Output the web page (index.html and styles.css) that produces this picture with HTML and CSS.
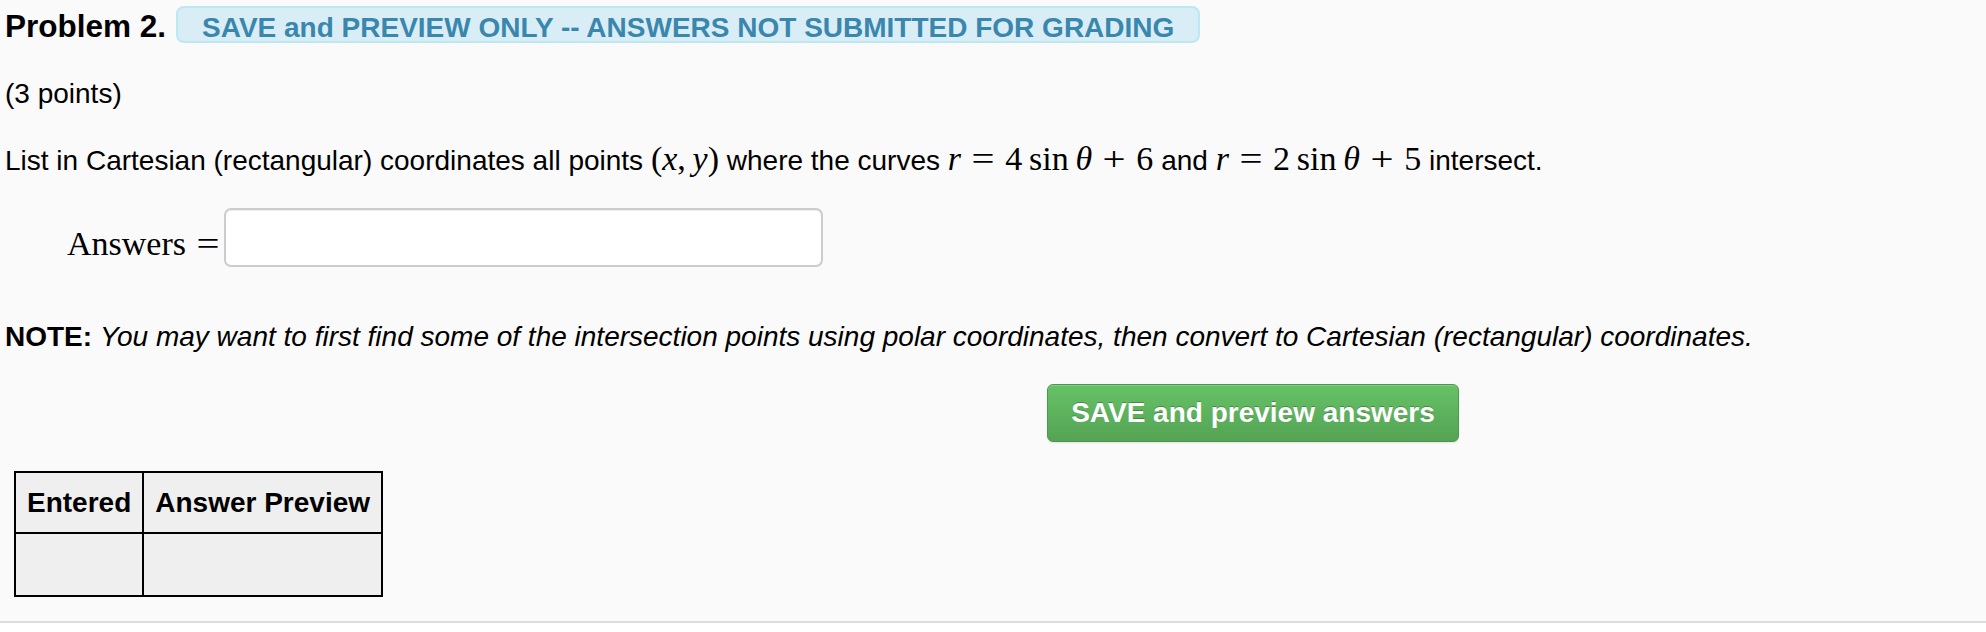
FILE: index.html
```html
<!DOCTYPE html>
<html>
<head>
<meta charset="utf-8">
<link rel="stylesheet" href="styles.css">
</head>
<body>
<div class="page">
  <div class="header">
    <h3 class="title">Problem 2.</h3>
    <span class="badge">SAVE and PREVIEW ONLY -- ANSWERS NOT SUBMITTED FOR GRADING</span>
  </div>
  <p class="points">(3 points)</p>
  <p class="question">List in Cartesian (rectangular) coordinates all points <span class="math">(<i>x</i>,<span class="comma"></span><i>y</i>)</span> where the curves <span class="math"><i>r</i><span class="rel"><span class="op">=</span></span>4<span class="thin"></span>sin<span class="thin"></span><i>θ</i><span class="bin"><span class="op">+</span></span>6</span> and <span class="math"><i>r</i><span class="rel"><span class="op">=</span></span>2<span class="thin"></span>sin<span class="thin"></span><i>θ</i><span class="bin"><span class="op">+</span></span>5</span> intersect.</p>
  <div class="answer-row">
    <span class="math label">Answers<span class="rel"><span class="op">=</span></span></span>
    <input class="answer" type="text">
  </div>
  <p class="note"><b>NOTE:</b> <i>You may want to first find some of the intersection points using polar coordinates, then convert to Cartesian (rectangular) coordinates.</i></p>
  <div class="actions">
    <button class="btn-success">SAVE and preview answers</button>
  </div>
  <table class="preview">
    <tr><th class="c1">Entered</th><th class="c2">Answer Preview</th></tr>
    <tr><td class="c1">&nbsp;</td><td class="c2">&nbsp;</td></tr>
  </table>
</div>
</body>
</html>
```
FILE: styles.css
```css
html { background: #ffffff; }
body {
  margin: 0;
  font-family: "Liberation Sans", Arial, sans-serif;
  font-size: 28px;
  color: #000;
}
.page {
  background: #fafafa;
  border-bottom: 2px solid #dcdcdc;
  padding: 6px 0 24px 5px;
}
.header {
  display: flex;
  align-items: center;
  gap: 10px;
  height: 37px;
}
.title {
  margin: 0;
  font-size: 31.5px;
  font-weight: bold;
  line-height: 37px;
  padding-top: 3px;
}
.badge {
  box-sizing: border-box;
  height: 37px;
  padding: 2px 24px 0 24px;
  background: #d9edf7;
  border: 2px solid #bce8f1;
  border-radius: 8px;
  color: #3a87ad;
  font-weight: bold;
  line-height: 35px;
}
p { margin: 0; line-height: 33px; }
.points { margin-top: 34px; }
.question { margin-top: 32px; }
.math {
  font-family: "Liberation Serif", "Times New Roman", serif;
  font-size: 34px;
  line-height: 33px;
}
.math i { font-style: italic; }
.thin { display: inline-block; width: 0.2em; }
.comma { display: inline-block; width: 0.2em; }
.rel, .bin { padding: 0 0.3em; }
.op {
  display: inline-block;
  width: 0.7em;
  text-align: center;
  transform: scaleX(1.2);
}
.answer-row {
  display: flex;
  align-items: center;
  margin-top: 31px;
  padding-left: 62px;
}
.label { padding-top: 12px; margin-right: 4px; }
.label .rel { padding-right: 0; }
.answer {
  box-sizing: border-box;
  width: 599px;
  height: 59px;
  margin: 0;
  border: 2px solid #cccccc;
  border-radius: 7px;
  background: #fff;
  box-shadow: inset 0 1px 1px rgba(0,0,0,0.075);
}
.note { margin-top: 53px; }
.actions {
  margin-top: 31px;
  padding-left: 1042px;
}
.btn-success {
  box-sizing: border-box;
  width: 412px;
  height: 58px;
  font-family: "Liberation Sans", Arial, sans-serif;
  font-size: 28px;
  font-weight: bold;
  color: #fff;
  text-shadow: 0 -1px 0 rgba(0,0,0,0.25);
  background: linear-gradient(to bottom, #66c266, #54a354);
  border: 1px solid #4d984d;
  border-radius: 6px;
  box-shadow: inset 0 1px 0 rgba(255,255,255,0.2), 0 1px 2px rgba(0,0,0,0.1);
  padding: 0;
}
.preview {
  margin-top: 29px;
  margin-left: 9px;
  border-collapse: collapse;
  border: 2px solid #000;
}
.preview th, .preview td {
  border: 2px solid #000;
  background: #efefef;
  padding: 0 11px;
  font-weight: bold;
  text-align: left;
  white-space: nowrap;
}
.preview th { height: 59px; }
.preview td { height: 61px; }
.c1 { width: 104px; }
.c2 { width: 214px; }
```
